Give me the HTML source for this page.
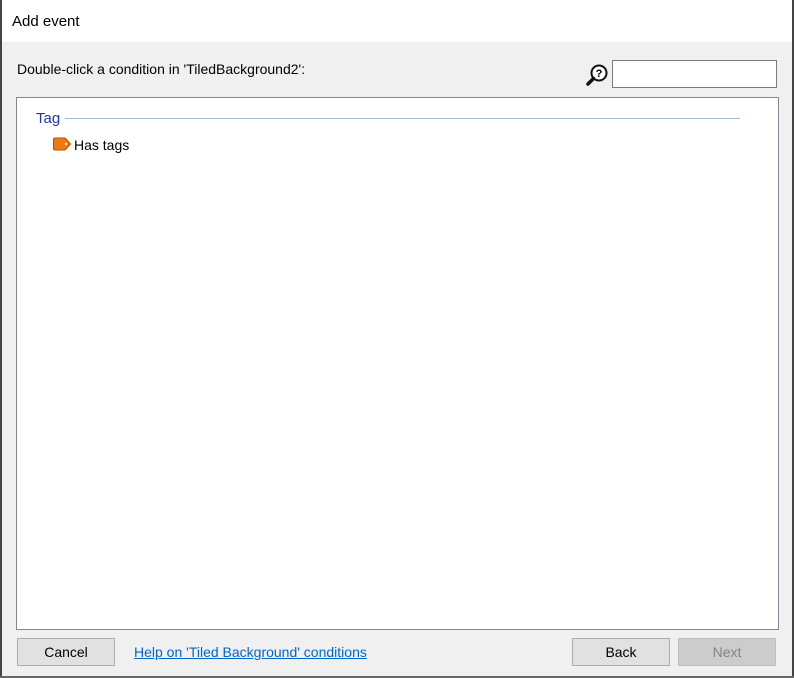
<!DOCTYPE html>
<html><head><meta charset="utf-8"><style>
*{margin:0;padding:0;box-sizing:border-box}
body{width:794px;height:678px;background:#f0f0f0;font-family:"Liberation Sans",sans-serif;font-size:14px;color:#000;position:relative;overflow:hidden}
.abs{position:absolute}
.btn{position:absolute;height:28px;background:#e1e1e1;border:1px solid #adadad;text-align:center;line-height:27px;font-size:14px}
</style></head><body>
<div class="abs" style="left:0;top:0;width:794px;height:42px;background:#fff"></div>
<div class="abs" style="left:0;top:0;width:2px;height:678px;background:#444"></div>
<div class="abs" style="left:792px;top:0;width:2px;height:678px;background:#444"></div>
<div class="abs" style="left:0;top:676px;width:794px;height:2px;background:#666"></div>
<div class="abs" style="left:12px;top:13px;font-size:15px">Add event</div>
<div class="abs" style="left:17px;top:61px">Double-click a condition in 'TiledBackground2':</div>
<svg class="abs" style="left:586px;top:63px" width="24" height="24" viewBox="0 0 24 24">
<circle cx="13" cy="10" r="7.5" fill="#fff" stroke="#111" stroke-width="2"/>
<line x1="7.5" y1="15.5" x2="2" y2="21" stroke="#111" stroke-width="3.5" stroke-linecap="round"/>
<text x="13" y="14" font-size="11" font-weight="bold" text-anchor="middle" font-family="Liberation Sans">?</text>
</svg>
<div class="abs" style="left:612px;top:60px;width:165px;height:28px;background:#fff;border:1px solid #7a7a7a"></div>
<div class="abs" style="left:16px;top:97px;width:763px;height:533px;background:#fff;border:1px solid #828790"></div>
<div class="abs" style="left:36px;top:110px;color:#1f3c9c;font-size:15px">Tag</div>
<div class="abs" style="left:65px;top:118px;width:675px;height:1px;background:#a8b8d8"></div>
<svg class="abs" style="left:52px;top:137px" width="20" height="14" viewBox="0 0 20 14">
<path d="M1.5 2.5 Q1.5 1 3 1 H13 L18.5 7 L13 13 H3 Q1.5 13 1.5 11.5 Z" fill="#ef7a10" stroke="#c04a00" stroke-width="1"/>
<circle cx="14" cy="7" r="1.2" fill="#fff"/>
</svg>
<div class="abs" style="left:74px;top:137px">Has tags</div>
<div class="btn" style="left:17px;top:638px;width:98px">Cancel</div>
<div class="abs" style="left:134px;top:644px;color:#0066cc;text-decoration:underline">Help on 'Tiled Background' conditions</div>
<div class="btn" style="left:572px;top:638px;width:98px">Back</div>
<div class="btn" style="left:678px;top:638px;width:98px;background:#cccccc;border-color:#bfbfbf;color:#838383">Next</div>
</body></html>
